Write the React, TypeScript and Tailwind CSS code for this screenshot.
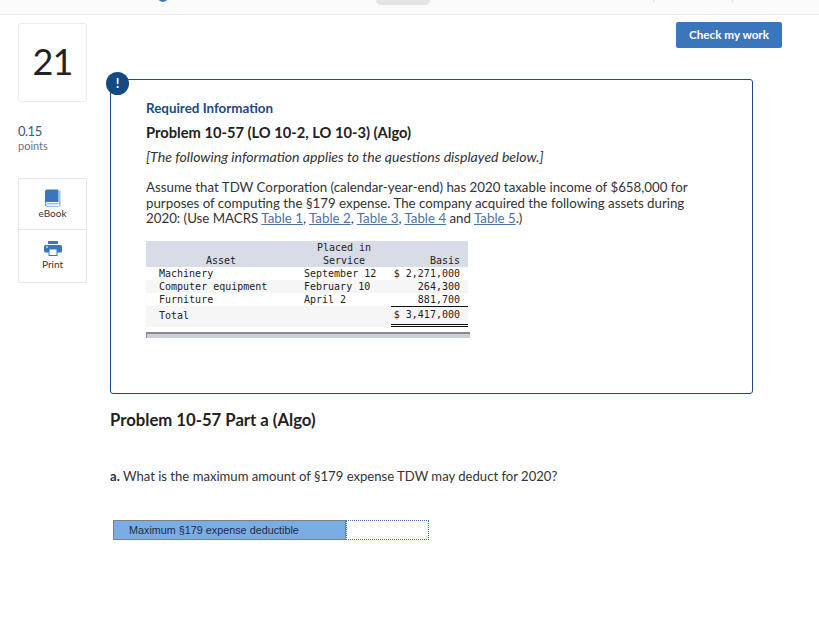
const sans = "font-['Lato','Open_Sans',sans-serif]";

function BookIcon() {
  return (
    <svg width="17" height="18" viewBox="0 0 17 18" aria-hidden="true">
      <path d="M1 2.500A2 2 0 0 1 3 0.500h10.500a1 1 0 0 1 1 1V13H3.500A2.500 2.500 0 0 0 1 15Z" fill="#3b76bd" />
      <path d="M1 14.500h13.500V14H3.500a1.500 1.500 0 0 0 0 3h11v.500H3a2 2 0 0 1-2-2Z" fill="#3b76bd" />
      <rect x="15" y="1.500" width="1.500" height="16" fill="#9dbde0" />
      <rect x="3" y="15" width="11.500" height="1.200" fill="#cfe0f2" />
    </svg>
  );
}

function PrintIcon() {
  return (
    <svg width="18" height="15" viewBox="0 0 18 15" aria-hidden="true">
      <rect x="4" y="0" width="10" height="3" rx="0.500" fill="#3b76bd" />
      <rect x="0" y="4" width="18" height="7.500" rx="1.500" fill="#3b76bd" />
      <rect x="5" y="8" width="8" height="6.500" fill="#ffffff" stroke="#3b76bd" strokeWidth="1" />
      <rect x="2" y="5.500" width="2" height="1" fill="#ffffff" />
    </svg>
  );
}

const rows = [
  { asset: "Machinery", placed: "September 12", basis: "$ 2,271,000", shade: false },
  { asset: "Computer equipment", placed: "February 10", basis: "264,300", shade: true },
  { asset: "Furniture", placed: "April 2", basis: "881,700", shade: false },
];

function AssetTable() {
  return (
    <div className="mt-[14px] w-[324px] font-['DejaVu_Sans_Mono',monospace] text-[10px] leading-[13px] text-[#222]">
      <div className="flex h-[26px] w-[322px] items-end bg-[#d8dce6]">
        <div className="w-[150px] text-center">Asset</div>
        <div className="w-[96px] text-center">Placed in<br />Service</div>
        <div className="w-[76px] pr-[8px] text-right">Basis</div>
      </div>
      {rows.map((r) => (
        <div key={r.asset} className={`flex h-[13px] w-[322px] ${r.shade ? "bg-[#f6f6f6]" : "bg-white"}`}>
          <div className="w-[158px] pl-[13px] whitespace-pre">{r.asset}</div>
          <div className="w-[87px] whitespace-pre">{r.placed}</div>
          <div className="w-[77px] pr-[8px] text-right whitespace-pre">{r.basis}</div>
        </div>
      ))}
      <div className="flex h-[21px] w-[322px] bg-[#f6f6f6]">
        <div className="w-[245px] pl-[13px] pt-[3px]">Total</div>
        <div className="relative h-[21px] w-[77px] border-t border-t-[#111] pr-[8px] pt-[1px] text-right">
          $ 3,417,000
          <div className="absolute bottom-0 left-0 right-0 h-[3px] border-y border-[#111]" />
        </div>
      </div>
      <div className="mt-[5px] h-[6px] w-[324px] border-t-2 border-l border-[#8a8a8a] bg-[#ccd0dc]" />
    </div>
  );
}

export default function App() {
  return (
    <div className={`relative h-[635px] w-[819px] overflow-hidden bg-white ${sans}`}>
      <div className="relative h-[15px] border-b border-[#ececec] bg-[#fafafa]">
        <div className="absolute left-[158px] top-[-8px] h-[10px] w-[10px] rounded-full bg-[#3b76bd]" />
        <div className="absolute left-[376px] top-[-5px] h-[10px] w-[54px] rounded-full bg-[#e4e4e6]" />
        <div className="absolute left-[653px] top-0 h-[2px] w-px bg-[#ddd]" />
        <div className="absolute left-[732px] top-0 h-[2px] w-px bg-[#ddd]" />
      </div>
      <div className="flex pl-[18px]">
        <aside className="w-[69px] pt-[8px]">
          <div className="flex h-[79px] items-center justify-center rounded-[3px] border border-[#ececec] pb-[4px] text-[36px] font-normal leading-none tracking-[-1px] text-[#222]">21</div>
          <div className="mt-[21px] text-[13px] leading-[16px] tracking-[-0.5px] text-[#3a5a80]">0.15</div>
          <div className="text-[11px] leading-[13px] text-[#6b7280]">points</div>
          <div className="mt-[26px] rounded-[2px] border border-[#e6e6e6]">
            <div className="flex h-[51px] flex-col items-center justify-start border-b border-[#e6e6e6] pt-[10px] text-[10px] leading-[11px] text-[#333]">
              <BookIcon />
              <span className="mt-[1px]">eBook</span>
            </div>
            <div className="flex h-[52px] flex-col items-center justify-start pt-[11px] text-[10px] leading-[11px] text-[#333]">
              <PrintIcon />
              <span className="mt-[3px]">Print</span>
            </div>
          </div>
        </aside>
        <main className="ml-[23px] w-[672px]">
          <div className="flex justify-end pt-[7px]">
            <button className="h-[26px] w-[106px] rounded-[2px] bg-[#3b76bd] text-[11.7px] font-bold text-white">Check my work</button>
          </div>
          <section className="relative mt-[31px] h-[315px] w-[643px] rounded-[3px] border border-[#1c4a82] pl-[35px] pt-[20px] text-[#333]">
            <div className="absolute left-[-5px] top-[-8px] flex h-[23px] w-[23px] items-center justify-center rounded-full bg-[#134a85] text-[13px] font-bold text-white">!</div>
            <div className="text-[13.4px] font-bold leading-[16px] text-[#1c4a82]">Required Information</div>
            <div className="mt-[7px] text-[14.7px] font-bold leading-[18px] text-[#222]">Problem 10-57 (LO 10-2, LO 10-3) (Algo)</div>
            <div className="mt-[8px] text-[14.1px] italic leading-[16px]">[The following information applies to the questions displayed below.]</div>
            <p className="mt-[15px] w-[560px] text-[13.3px] leading-[15.500px]">
              Assume that TDW Corporation (calendar-year-end) has 2020 taxable income of $658,000 for purposes of computing the §179 expense. The company acquired the following assets during 2020: (Use MACRS{" "}
              <span className="text-[#4d73a5] underline">Table 1</span>, <span className="text-[#4d73a5] underline">Table 2</span>, <span className="text-[#4d73a5] underline">Table 3</span>, <span className="text-[#4d73a5] underline">Table 4</span> and <span className="text-[#4d73a5] underline">Table 5</span>.)
            </p>
            <AssetTable />
          </section>
          <h2 className="mt-[16px] text-[16.700px] font-bold leading-[20px] text-[#222]">Problem 10-57 Part a (Algo)</h2>
          <p className="mt-[38px] text-[13.1px] leading-[16px] text-[#333]"><b>a.</b> What is the maximum amount of §179 expense TDW may deduct for 2020?</p>
          <div className="ml-[3px] mt-[36px] flex h-[20px] w-[316px]">
            <div className="flex w-[233px] items-center border border-[#808080] bg-[#7aade6] pl-[15px] font-['Liberation_Sans',sans-serif] text-[10.8px] text-[#1f2a44]">Maximum §179 expense deductible</div>
            <div className="w-[83px] border border-dotted border-[#3b76bd] bg-white" />
          </div>
        </main>
      </div>
    </div>
  );
}
